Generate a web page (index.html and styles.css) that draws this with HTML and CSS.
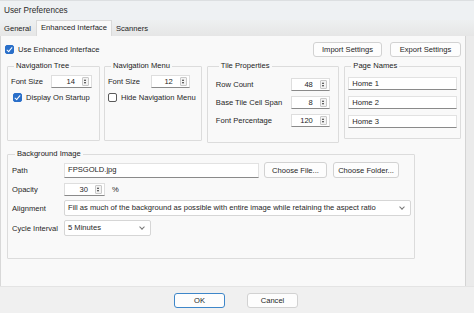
FILE: index.html
```html
<!DOCTYPE html>
<html lang="en">
<head>
    <meta charset="UTF-8">
    <title>User Preferences</title>
    <link rel="stylesheet" href="styles.css">
</head>
<body>
<div class="window">
    <div class="titlebar">User Preferences</div>
    <div class="tabs">
        <div class="tab">General</div>
        <div class="tab active">Enhanced Interface</div>
        <div class="tab">Scanners</div>
    </div>

    <div class="main">
        <div class="panel">
            <div class="toprow">
                <label class="check"><span class="box on"></span>Use Enhanced Interface</label>
                <div class="topbtns">
                    <button class="btn btn-import">Import Settings</button>
                    <button class="btn btn-export">Export Settings</button>
                </div>
            </div>

            <div class="groups">
                <fieldset class="group g-tree">
                    <legend>Navigation Tree</legend>
                    <div class="row">
                        <span class="lbl">Font Size</span>
                        <div class="spin w41"><span>14</span><i class="arrows"></i></div>
                    </div>
                    <label class="check"><span class="box on"></span>Display On Startup</label>
                </fieldset>

                <fieldset class="group g-menu">
                    <legend>Navigation Menu</legend>
                    <div class="row">
                        <span class="lbl">Font Size</span>
                        <div class="spin w39"><span>12</span><i class="arrows"></i></div>
                    </div>
                    <label class="check"><span class="box"></span>Hide Navigation Menu</label>
                </fieldset>

                <fieldset class="group g-tile">
                    <legend>Tile Properties</legend>
                    <div class="tilegrid">
                        <span class="lbl">Row Count</span>
                        <div class="spin w39"><span>48</span><i class="arrows"></i></div>
                        <span class="lbl">Base Tile Cell Span</span>
                        <div class="spin w39"><span>8</span><i class="arrows"></i></div>
                        <span class="lbl">Font Percentage</span>
                        <div class="spin w39"><span>120</span><i class="arrows"></i></div>
                    </div>
                </fieldset>

                <fieldset class="group g-pages">
                    <legend>Page Names</legend>
                    <div class="field">Home 1</div>
                    <div class="field">Home 2</div>
                    <div class="field">Home 3</div>
                </fieldset>
            </div>

            <fieldset class="group g-bg">
                <legend>Background Image</legend>
                <div class="bgrow">
                    <span class="lbl">Path</span>
                    <div class="field path">FPSGOLD.jpg</div>
                    <button class="btn btn-file">Choose File...</button>
                    <button class="btn btn-folder">Choose Folder...</button>
                </div>
                <div class="bgrow">
                    <span class="lbl">Opacity</span>
                    <div class="spin w41"><span>30</span><i class="arrows"></i></div>
                    <span class="pct">%</span>
                </div>
                <div class="bgrow">
                    <span class="lbl">Alignment</span>
                    <div class="select wide">Fill as much of the background as possible with entire image while retaining the aspect ratio</div>
                </div>
                <div class="bgrow">
                    <span class="lbl">Cycle Interval</span>
                    <div class="select short">5 Minutes</div>
                </div>
            </fieldset>
        </div>
        <div class="sidegap"></div>
    </div>

    <div class="footer">
        <button class="btn btn-ok">OK</button>
        <button class="btn btn-cancel">Cancel</button>
    </div>
</div>
</body>
</html>
```

FILE: styles.css
```css
* {
    box-sizing: border-box;
}

body {
    margin: 0;
    width: 474px;
    height: 313px;
    overflow: hidden;
    font-family: "Liberation Sans", Arial, sans-serif;
    font-size: 7.6px;
    color: #262626;
    background: #ececec;
}

.window {
    display: flex;
    flex-direction: column;
    height: 313px;
}

.titlebar {
    height: 20px;
    line-height: 20px;
    padding-left: 4px;
    font-size: 8.2px;
    color: #2a2a2a;
    background: #eef1f3;
    border-top: 1px solid #dcdfe1;
}

.tabs {
    height: 16px;
    display: flex;
    align-items: flex-end;
    padding-left: 1px;
    background: linear-gradient(#eef0f1, #e6e6e6);
}

.tab {
    height: 14px;
    line-height: 13px;
    padding: 0 3px;
    color: #222;
}

.tab.active {
    height: 16px;
    line-height: 14px;
    padding: 0 4px;
    margin: 0 1px 0 2px;
    background: #f9f9f9;
    border: 1px solid #dadada;
    border-bottom: none;
}

.main {
    display: flex;
    height: 250px;
}

.panel {
    width: 466px;
    background: #f9f9f9;
    border-left: 1px solid #d8d8d8;
    border-right: 1px solid #d4d4d4;
    padding: 6px 4px 0 4px;
}

.sidegap {
    flex: 1;
    background: #ebebeb;
}

.toprow {
    display: flex;
    justify-content: space-between;
    align-items: center;
    height: 15px;
}

.topbtns {
    display: flex;
    gap: 8px;
}

.check {
    display: flex;
    align-items: center;
    gap: 4px;
    white-space: nowrap;
}

.box {
    width: 9px;
    height: 9px;
    border: 1px solid #5a5a5a;
    border-radius: 2px;
    background: #fff;
    position: relative;
}

.box.on {
    border-color: #2a6fc9;
    background: #2a6fc9;
}

.box.on::after {
    content: "";
    position: absolute;
    left: 2px;
    top: 0px;
    width: 2px;
    height: 5px;
    border: solid #fff;
    border-width: 0 1.2px 1.2px 0;
    transform: rotate(40deg);
}

.btn {
    font-family: inherit;
    font-size: 7.6px;
    color: #262626;
    height: 15px;
    padding: 0;
    background: #fdfdfd;
    border: 1px solid #d2d2d2;
    border-radius: 3px;
}

.btn-import { width: 69px; }
.btn-export { width: 71px; }
.btn-file { width: 63px; margin-left: 5px; height: 16px; }
.btn-folder { width: 66px; margin-left: 6px; height: 16px; }

/* group boxes */
.groups {
    display: flex;
    align-items: flex-start;
    gap: 4px;
    margin: 4px 0 0 2px;
}

.group {
    margin: 0;
    padding: 0 3px;
    border: 1px solid #dcdcdc;
    border-radius: 1px;
}

.group legend {
    padding: 0 2px;
    margin-left: 3px;
    line-height: 10px;
    color: #222;
}

.g-tree { width: 94px; height: 80px; padding-top: 4px; }
.g-menu { width: 99px; height: 80px; padding-top: 4px; margin-left: 0; }
.g-tile { width: 134px; height: 82px; margin-left: 1px; padding: 7px 0 0 8px; }
.g-pages { width: 118px; height: 78px; margin-left: 1px; padding: 6px 3px 0 3px; }

.row {
    display: flex;
    align-items: center;
    justify-content: space-between;
    height: 13px;
    margin-bottom: 5px;
    padding-right: 4px;
}

.g-tree .check { margin-left: 2px; }
.g-menu .row { padding-right: 8px; }

.spin {
    height: 13px;
    background: #fff;
    border: 1px solid #dedede;
    border-bottom-color: #8a8a8a;
    display: flex;
    align-items: center;
    justify-content: flex-end;
    padding-right: 2px;
}

.spin span {
    margin-right: 7px;
}

.w41 { width: 41px; }
.w39 { width: 39px; }

.arrows {
    width: 7px;
    height: 9px;
    border: 1px solid #c8c8c8;
    border-radius: 1px;
    background: #f3f3f3;
    position: relative;
}

.arrows::before,
.arrows::after {
    content: "";
    position: absolute;
    left: 1px;
    border-left: 1.5px solid transparent;
    border-right: 1.5px solid transparent;
}

.arrows::before {
    top: 1px;
    border-bottom: 2px solid #333;
}

.arrows::after {
    bottom: 1px;
    border-top: 2px solid #333;
}

.tilegrid {
    display: grid;
    grid-template-columns: 75px 39px;
    row-gap: 5px;
    align-items: center;
}

.tilegrid .spin {
    height: 13px;
}

.field {
    height: 13px;
    line-height: 12px;
    padding-left: 3px;
    background: #fff;
    border: 1px solid #e2e2e2;
    border-bottom-color: #8a8a8a;
    margin-bottom: 6px;
}

/* background image group */
.g-bg {
    width: 407px;
    height: 110px;
    margin: 6px 0 0 2px;
    padding: 3px 3px 0 4px;
}

.bgrow {
    display: flex;
    align-items: center;
    height: 16px;
    margin-bottom: 3px;
}

.bgrow:nth-child(4) {
    margin-bottom: 4px;
}

.bgrow .lbl {
    width: 52px;
    flex: none;
}

.bgrow .field.path {
    width: 195px;
    height: 15px;
    margin: 0;
}

.pct {
    margin-left: 7px;
}

.select {
    height: 16px;
    line-height: 14px;
    padding-left: 3px;
    background: #fff;
    border: 1px solid #d6d6d6;
    border-radius: 2px;
    position: relative;
    white-space: nowrap;
    overflow: hidden;
}

.select::after {
    content: "";
    position: absolute;
    right: 6px;
    top: 4px;
    width: 3px;
    height: 3px;
    border: solid #777;
    border-width: 0 1px 1px 0;
    transform: rotate(45deg);
}

.select.wide { width: 347px; }
.select.short { width: 87px; }

.footer {
    flex: 1;
    display: flex;
    justify-content: center;
    align-items: center;
    gap: 22px;
    padding-right: 2px;
    background: #f0f0f0;
    border-top: 1px solid #e4e4e4;
}

.footer .btn {
    width: 51px;
    height: 15px;
}

.btn-ok {
    border: 1.5px solid #3d86c9;
    border-radius: 3px;
}
```
